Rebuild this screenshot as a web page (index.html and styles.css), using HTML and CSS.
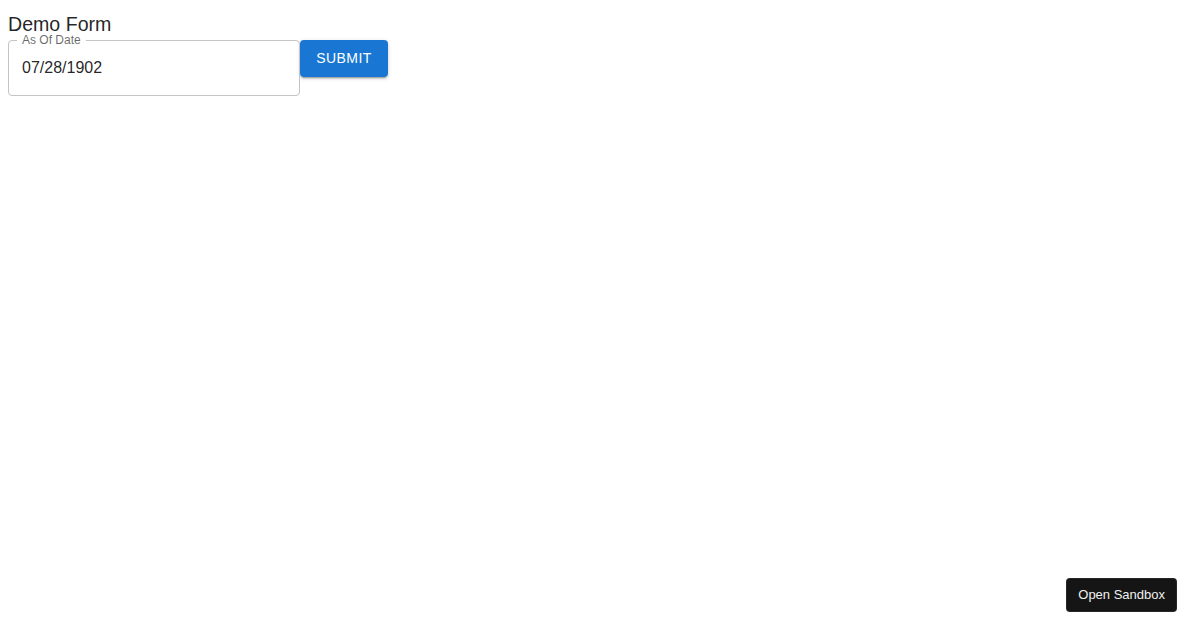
FILE: index.html
```html
<!DOCTYPE html>
<html>
<head>
<meta charset="utf-8">
<title>Demo Form</title>
<link rel="stylesheet" href="styles.css">
</head>
<body>
<div class="title">Demo Form</div>
<form class="row">
  <div class="field">
    <label class="field-label">As Of Date</label>
    <input class="field-input" type="text" value="07/28/1902">
  </div>
  <button class="submit" type="button">Submit</button>
</form>
<a class="sandbox">Open Sandbox</a>
</body>
</html>
```
FILE: styles.css
```css
html, body {
  background: #fff;
}
body {
  margin: 8px;
  font-family: "Liberation Sans", Arial, sans-serif;
  color: rgba(0, 0, 0, 0.87);
}
.title {
  font-size: 19.6px;
  line-height: 32px;
}
.row {
  display: flex;
  align-items: flex-start;
  margin: 0;
}
.field {
  position: relative;
  width: 290px;
  height: 54px;
  border: 1px solid #c4c4c4;
  border-radius: 4px;
}
.field-label {
  position: absolute;
  left: 8px;
  top: -7px;
  padding: 0 5px;
  background: #fff;
  font-size: 12px;
  line-height: 12px;
  color: rgba(0, 0, 0, 0.6);
}
.field-input {
  display: block;
  box-sizing: border-box;
  width: 100%;
  height: 54px;
  padding: 0 13px;
  border: none;
  outline: none;
  background: transparent;
  font-family: "Liberation Sans", Arial, sans-serif;
  font-size: 16px;
  color: rgba(0, 0, 0, 0.87);
}
.submit {
  width: 88px;
  height: 36.5px;
  padding: 6px 0;
  border: none;
  border-radius: 4px;
  background: #1976d2;
  color: #fff;
  font-family: "Liberation Sans", Arial, sans-serif;
  font-size: 14px;
  line-height: 1.75;
  letter-spacing: 0.4px;
  text-transform: uppercase;
  text-align: center;
  box-shadow: 0 3px 1px -2px rgba(0,0,0,0.2), 0 2px 2px 0 rgba(0,0,0,0.14), 0 1px 5px 0 rgba(0,0,0,0.12);
  cursor: pointer;
}
.sandbox {
  position: fixed;
  right: 23px;
  bottom: 18px;
  padding: 8px 12px;
  line-height: 18px;
  font-size: 13px;
  color: #f0f0f0;
  background: #151515;
  border-radius: 4px;
  box-shadow: inset 0 0 0 1px rgba(255,255,255,0.08);
}
```
